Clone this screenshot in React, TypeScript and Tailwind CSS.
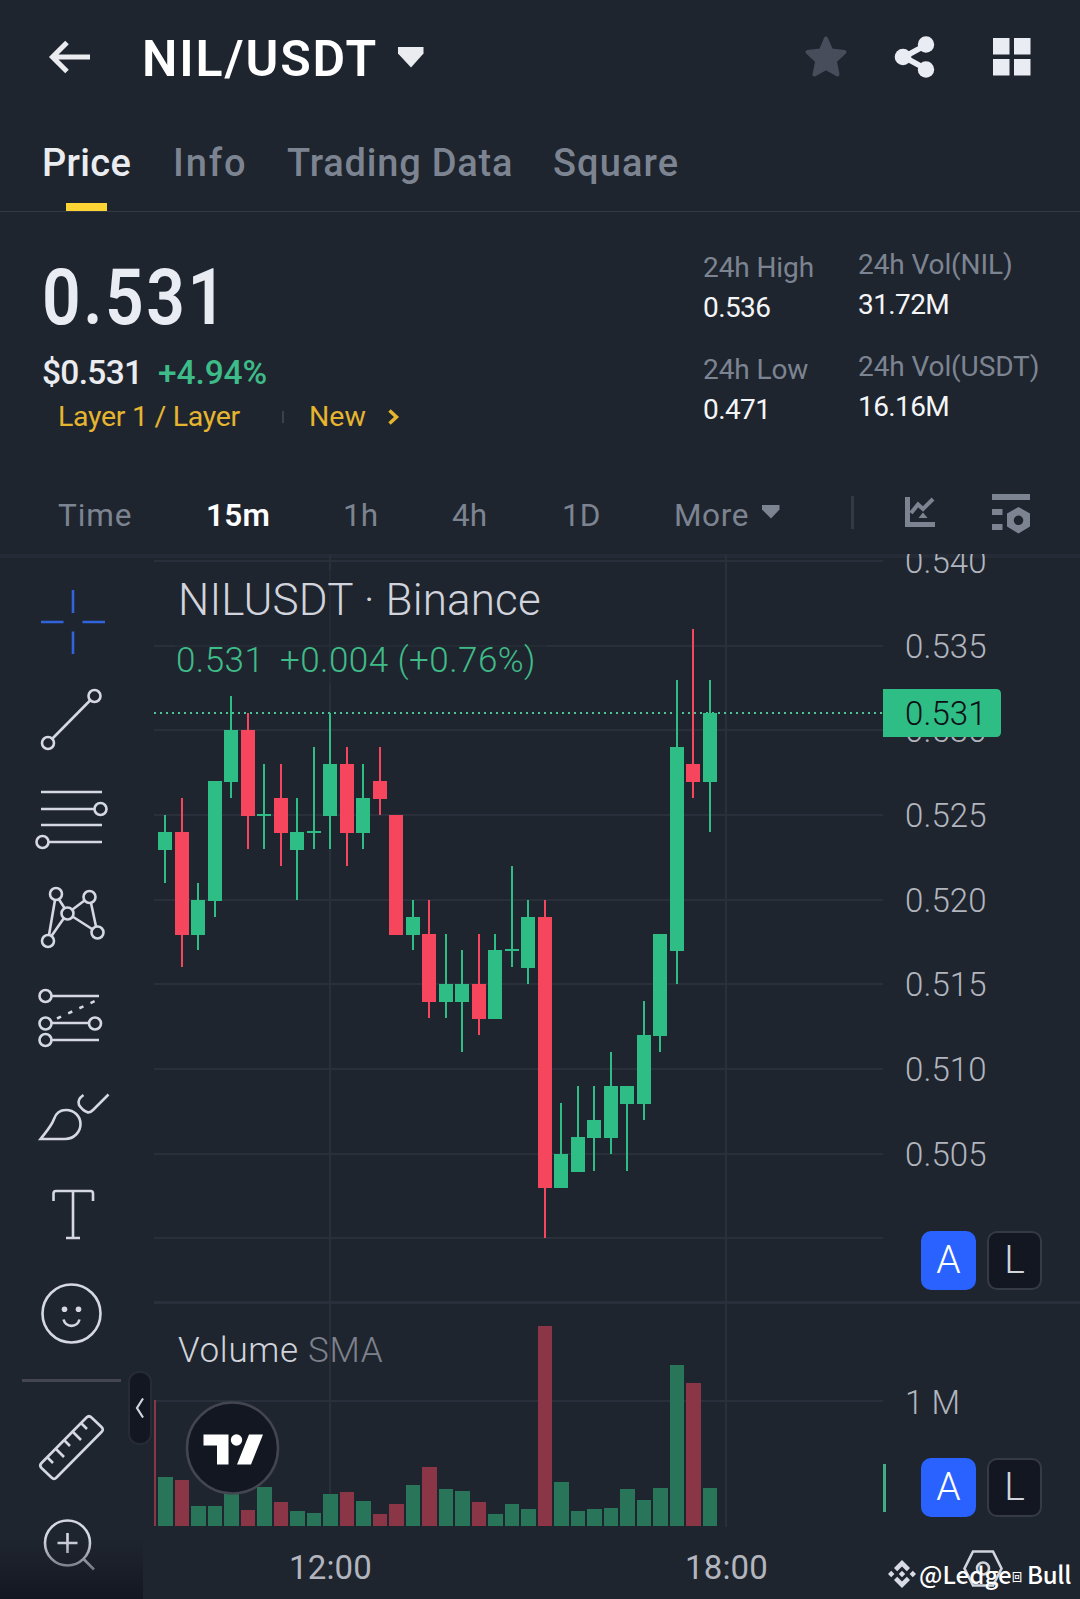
import type { ReactNode } from "react";

type Candle = {
  up: boolean;
  high: number;
  top: number;
  bottom: number;
  low: number;
  vol: number;
};

const UP = "#2ebd85";
const DOWN = "#f6465d";
const GRID = "#2a303b";

const c = (
  side: "u" | "d",
  high: number,
  top: number,
  bottom: number,
  low: number,
  vol: number
): Candle => ({ up: side === "u", high, top, bottom, low, vol });

// prices are in thousandths, volume in px
const candles: Candle[] = [
  c("u", 525, 524, 523, 521, 49),
  c("d", 526, 524, 518, 516, 46),
  c("u", 521, 520, 518, 517, 20),
  c("u", 527, 527, 520, 519, 20),
  c("u", 532, 530, 527, 526, 32),
  c("d", 531, 530, 525, 523, 16),
  c("u", 528, 525, 525, 523, 39),
  c("d", 528, 526, 524, 522, 24),
  c("u", 526, 524, 523, 520, 15),
  c("u", 529, 524, 524, 523, 13),
  c("u", 531, 528, 525, 523, 32),
  c("d", 529, 528, 524, 522, 34),
  c("u", 528, 526, 524, 523, 25),
  c("d", 529, 527, 526, 525, 12),
  c("d", 525, 525, 518, 518, 22),
  c("u", 520, 519, 518, 517, 41),
  c("d", 520, 518, 514, 513, 59),
  c("u", 518, 515, 514, 513, 37),
  c("u", 517, 515, 514, 511, 35),
  c("d", 518, 515, 513, 512, 24),
  c("u", 518, 517, 513, 513, 12),
  c("u", 522, 517, 517, 516, 22),
  c("u", 520, 519, 516, 515, 17),
  c("d", 520, 519, 503, 500, 200),
  c("u", 508, 505, 503, 503, 44),
  c("u", 509, 506, 504, 504, 15),
  c("u", 509, 507, 506, 504, 17),
  c("u", 511, 509, 506, 505, 18),
  c("u", 509, 509, 508, 504, 37),
  c("u", 514, 512, 508, 507, 26),
  c("u", 518, 518, 512, 511, 38),
  c("u", 533, 529, 517, 515, 161),
  c("d", 536, 528, 527, 526, 143),
  c("u", 533, 531, 527, 524, 38),
];

const yOf = (p: number) => Math.round(815 - (p - 525) * 16.93);
const xOf = (i: number) => Math.round(158 + 16.5 * i);

const priceLabels = [540, 535, 530, 525, 520, 515, 510, 505];
const gridPrices = [540, 535, 530, 525, 520, 515, 510, 505, 500];

const tabs = [
  { label: "Price", width: "w-[131px]", track: "tracking-[0.3px]", active: true },
  { label: "Info", width: "w-[114px]", track: "tracking-[1.9px]" },
  { label: "Trading Data", width: "w-[266px]", track: "tracking-[0.8px]" },
  { label: "Square", width: "w-[160px]", track: "tracking-[1.1px]" },
];

const intervals = [
  { label: "Time", width: "w-[148px]", track: "tracking-[0.9px]" },
  { label: "15m", width: "w-[137px]", track: "tracking-[0.2px]", active: true },
  { label: "1h", width: "w-[109px]", track: "tracking-normal" },
  { label: "4h", width: "w-[110px]", track: "tracking-normal" },
  { label: "1D", width: "w-[112px]", track: "tracking-normal" },
  { label: "More", width: "w-[88px]", track: "tracking-[0.6px]" },
];

const Header = () => (
  <header className="flex h-[114px] items-center pl-12">
    <svg className="h-[34px] w-[44px]" viewBox="0 0 44 34" fill="none" stroke="#eaecef" strokeWidth="5">
      <path d="M19 2.5 4.5 17 19 31.5M5 17H42" />
    </svg>
    <h1 className="ml-[50px] w-[256px] pt-1 text-[50px] leading-[60px] font-semibold tracking-[1.9px] text-white">
      NIL/USDT
    </h1>
    <svg className="h-[21px] w-[26px]" viewBox="0 0 26 21" fill="#eaecef">
      <path d="M0 0H25.500V6.500L13 20.500 0 6.500Z" />
    </svg>
    <svg
      className="ml-[380px] h-[44px] w-[44px]"
      viewBox="0 0 44 44"
      fill="#474d5b"
      stroke="#474d5b"
      strokeWidth="4"
      strokeLinejoin="round"
    >
      <path d="M22 3.500 27.200 15.500 40.500 17 30.800 26 33.500 39.500 22 33 10.500 39.500 13.200 26 3.500 17 16.800 15.500Z" />
    </svg>
    <svg className="ml-[46px] h-[42px] w-[42px]" viewBox="0 0 42 42" fill="#eaecf3">
      <path d="M10 21 33 8.500M10 21 33 33.500" stroke="#eaecf3" strokeWidth="5.500" />
      <circle cx="9" cy="21" r="8.300" />
      <circle cx="32" cy="8.500" r="8.200" />
      <circle cx="32" cy="33.500" r="8.200" />
    </svg>
    <svg className="ml-[57px] h-[38px] w-[38px]" viewBox="0 0 38 38" fill="#eaecf3">
      <path d="M0 0H16.500V16.500H0ZM21 0H37.500V16.500H21ZM0 21H16.500V37.500H0ZM21 21H37.500V37.500H21Z" />
    </svg>
  </header>
);

const Tabs = () => (
  <nav className="flex h-[98px] border-b border-[#333a45] pt-6 pl-[42px]">
    {tabs.map((t) => (
      <div key={t.label} className={`${t.width} flex flex-col justify-between whitespace-nowrap`}>
        <span
          className={`text-[38px] leading-[50px] font-medium ${t.track} ${
            t.active ? "text-[#eaecef]" : "text-[#848b98]/95"
          }`}
        >
          {t.label}
        </span>
        {t.active && <span className="ml-6 h-2 w-[41px] bg-[#fcd535]" />}
      </div>
    ))}
  </nav>
);

const Stat = ({ label, value }: { label: string; value: string }) => (
  <div className="text-[28px] leading-10 whitespace-nowrap">
    <div className="tracking-[-0.1px] text-[#7d8491]">{label}</div>
    <div className="tracking-[-0.6px] text-[#f4f5f7]">{value}</div>
  </div>
);

const Summary = () => (
  <section className="flex h-[262px] pl-[42px]">
    <div className="w-[661px] pt-[46px]">
      <div className="origin-left scale-x-[0.88] text-[77px] leading-[80px] font-semibold tracking-[2.9px] text-[#eaecf3]">
        0.531
      </div>
      <div className="mt-[15px] flex text-[33.5px] leading-10 font-medium">
        <span className="w-[116px] tracking-[-0.7px] text-[#eaecef]">$0.531</span>
        <span className="tracking-[-0.1px] text-[#3dbb88]">+4.94%</span>
      </div>
      <div className="mt-1.5 flex items-center text-[28.5px] leading-9 text-[#e6b52f]">
        <span className="ml-4 w-[224px] tracking-[-0.3px]">Layer 1 / Layer</span>
        <span className="h-3 w-0.5 bg-[#3a414d]" />
        <span className="ml-[25px] w-[79px]">New</span>
        <svg className="h-4 w-3" viewBox="0 0 12 16" fill="none" stroke="#e6b52f" strokeWidth="3.500">
          <path d="M1.500 1.500 8.500 8 1.500 14.500" />
        </svg>
      </div>
    </div>
    <div className="flex w-[155px] flex-col gap-[22px] pt-9">
      <Stat label="24h High" value="0.536" />
      <Stat label="24h Low" value="0.471" />
    </div>
    <div className="flex flex-col gap-[22px] pt-[33px]">
      <Stat label="24h Vol(NIL)" value="31.72M" />
      <Stat label="24h Vol(USDT)" value="16.16M" />
    </div>
  </section>
);

const Intervals = () => (
  <div className="flex h-[80px] items-center pt-0.5 pl-[58px] text-[31.5px] leading-10">
    {intervals.map((t) => (
      <span
        key={t.label}
        className={`${t.width} ${t.track} pt-0.5 ${
          t.active ? "font-semibold text-white" : "text-[#7d8491]"
        }`}
      >
        {t.label}
      </span>
    ))}
    <svg className="-mt-1.5 h-[14px] w-[18px]" viewBox="0 0 18 14" fill="#7d8491">
      <path d="M0 0H17.500V4.500L9 13.500 0 4.500Z" />
    </svg>
    <span className="-mt-1.5 ml-[71px] h-[33px] w-[3px] bg-[#333945]" />
    <svg className="-mt-1.5 ml-[51px] h-[30px] w-[30px]" viewBox="0 0 30 30" fill="none" stroke="#7d8491">
      <path d="M2.500 0V27.500H30" strokeWidth="5" />
      <path d="M6 16 13 7.500 18 12 28 2" strokeWidth="4" />
      <path d="M13.500 21H22.500L18 15.500Z" fill="#7d8491" stroke="none" />
    </svg>
    <svg className="-mt-0.5 ml-[57px] h-[40px] w-[38px]" viewBox="0 0 38 40" fill="#7d8491">
      <path d="M0 0H38V6H0ZM0 15H10.500V21H0ZM0 30H10.500V36H0Z" />
      <path
        fillRule="evenodd"
        d="M26.500 13 38 19.500V32.500L26.500 39.500 15 32.500V19.500ZM26.500 21.500A4.800 4.800 0 1 0 26.500 31.100 4.800 4.800 0 1 0 26.500 21.500Z"
      />
    </svg>
  </div>
);

const Tool = ({ children, color = "#d5d8e3" }: { children: ReactNode; color?: string }) => (
  <svg
    className="h-[99px] w-[143px] shrink-0"
    viewBox="0 0 143 99"
    fill="none"
    stroke={color}
    strokeWidth="2.6"
  >
    {children}
  </svg>
);

const Toolbar = () => (
  <aside className="relative flex w-[143px] flex-col overflow-hidden pt-[18px]">
    <Tool color="#3163dd">
      <path d="M41 50H63.500M82.500 50H105M73 18V41M73 59.500V82" />
    </Tool>
    <Tool>
      <circle cx="94.500" cy="25" r="6" />
      <circle cx="48" cy="72" r="6" />
      <path d="M52.500 67.500 90 29.500" />
    </Tool>
    <Tool>
      <path d="M41 22H102M41 39H94M41 55H102M49 72H102" />
      <circle cx="100.500" cy="39" r="6" />
      <circle cx="42.500" cy="72" r="6" />
    </Tool>
    <Tool>
      <path d="M49 66 55 31M59 30.500 64.500 39M51.500 67 64 49M72.500 40.500 84.500 31.500M72.500 47.500 92 60M91 34 96 57.500" />
      <circle cx="56" cy="25" r="6" />
      <circle cx="89.500" cy="28" r="6" />
      <circle cx="67.500" cy="44.500" r="6" />
      <circle cx="97.500" cy="63.500" r="6" />
      <circle cx="48" cy="72" r="6" />
    </Tool>
    <Tool>
      <path d="M52 28H99M52 55H89M52 72H99" />
      <path d="M57 50.500 95 33" strokeDasharray="4.500 7.800" />
      <circle cx="45.500" cy="28" r="6" />
      <circle cx="45.500" cy="55.500" r="6" />
      <circle cx="95" cy="55.500" r="6" />
      <circle cx="45.500" cy="72" r="6" />
    </Tool>
    <Tool>
      <path d="M40.500 72H65C74 72 80.500 65 80.500 57S74 43 66 43C60 43 56 46 54 52 51 60 45 66 40.500 72Z" />
      <path d="M83.500 28C79 31 77.500 34 79 38 81 41 84 44 87 45 89 46 91 45 93 43L108.500 27.500" />
    </Tool>
    <Tool>
      <path d="M53.500 35V27.500Q53.500 25 56 25H90.500Q93 25 93 27.500V35M73 25V72M66 72H80" />
    </Tool>
    <Tool>
      <circle cx="71.500" cy="48.500" r="29" />
      <circle cx="64.500" cy="44.300" r="2.800" fill="#d5d8e3" stroke="none" />
      <circle cx="78.500" cy="44.300" r="2.800" fill="#d5d8e3" stroke="none" />
      <path d="M63.500 54.500C66 63 77 63 79.500 54.500" />
    </Tool>
    <div className="mt-[15px] ml-[22px] h-[3px] w-[99px] shrink-0 bg-[#434651]" />
    <div className="mt-[16px] shrink-0">
      <Tool>
        <path d="M86.500 19.500Q89 17 91.500 19.500L101.500 29Q104 31.500 101.500 34L56.500 79.500Q54 82 51.500 79.500L41.500 70Q39 67.500 41.500 65Z" />
        <path d="M81.500 25.500 87 31M73 34 81 42M64.500 42.500 70 48M56 51 64 59M47.500 59.500 53 65" />
      </Tool>
    </div>
    <Tool>
      <circle cx="67.500" cy="46" r="22.500" />
      <path d="M83.500 62 94 72.500M57.500 46H77.500M67.500 36V56" />
    </Tool>
    <div className="absolute bottom-0 left-0 h-[60px] w-full bg-linear-to-b from-[#131722]/0 to-[#131722]" />
  </aside>
);

const ScaleButtons = ({ className }: { className: string }) => (
  <div
    className={`absolute left-[778px] flex gap-[11px] text-center text-[39px] leading-[57px] font-light ${className}`}
  >
    <button className="h-[59px] w-[55px] rounded-[10px] bg-[#2962ff] text-white">A</button>
    <button className="h-[59px] w-[55px] rounded-[10px] border-2 border-[#363a45] bg-[#131722] leading-[53px] text-[#d1d4dc]">
      L
    </button>
  </div>
);

const Chart = () => (
  <div className="relative w-[937px]">
    <svg className="h-[1045px] w-[937px]" viewBox="143 554 937 1045" fontFamily="Roboto, sans-serif">
      <g fill={GRID}>
        {gridPrices.map((p) => (
          <rect key={p} x="154" y={yOf(p) - 1} width="729" height="2" />
        ))}
        <rect x="154" y="1400" width="729" height="2" />
        <rect x="329" y="554" width="2" height="972" />
        <rect x="725" y="554" width="2" height="973" />
        <rect x="154" y="1301" width="926" height="3" />
      </g>

      <rect x="154" y="1400" width="2" height="126" fill="#8a3646" />
      {candles.map((k, i) => (
        <rect
          key={i}
          x={xOf(i)}
          y={1526 - k.vol}
          width={xOf(i + 1) - 2 - xOf(i)}
          height={k.vol}
          fill={k.up ? "#29755a" : "#8a3646"}
        />
      ))}

      <path d="M154 713H883" stroke="#4cc496" strokeWidth="2" strokeDasharray="2 4" />
      {candles.map((k, i) => (
        <g key={i} fill={k.up ? UP : DOWN}>
          <rect x={xOf(i) + 6} y={yOf(k.high)} width="2" height={yOf(k.low) - yOf(k.high)} />
          <rect
            x={xOf(i)}
            y={k.top === k.bottom ? yOf(k.top) - 1 : yOf(k.top)}
            width="14"
            height={k.top === k.bottom ? 2 : yOf(k.bottom) - yOf(k.top) + 1}
          />
        </g>
      ))}

      <g fontSize="33" fontWeight="300" fill="#b2b5be" letterSpacing="0.1">
        {priceLabels.map((p) => (
          <text key={p} x="905" y={yOf(p) + 12}>
            {(p / 1000).toFixed(3)}
          </text>
        ))}
        <text x="905" y="1414">1 M</text>
      </g>
      <path d="M883 689H996Q1001 689 1001 694V732Q1001 737 996 737H883Z" fill={UP} />
      <text x="905" y="725" fontSize="33" fontWeight="300" letterSpacing="0.1" fill="#0c0e15">
        0.531
      </text>

      <rect x="175" y="570" width="372" height="115" fill="#1f252f" fillOpacity="0.5" />
      <text x="178" y="615" fontSize="44" fontWeight="300" letterSpacing="0.15" fill="#d1d4dc">
        NILUSDT · Binance
      </text>
      <g fontSize="35" fontWeight="300" letterSpacing="0.45" fill="#3fbb88">
        <text x="176" y="672">0.531</text>
        <text x="280" y="672">+0.004 (+0.76%)</text>
      </g>
      <g fontSize="35" fontWeight="300" letterSpacing="0.7">
        <text x="178" y="1362" fill="#d1d4dc">Volume</text>
        <text x="308" y="1362" fill="#7d818c">SMA</text>
      </g>
      <g fontSize="33" fill="#b2b5be" textAnchor="middle">
        <text x="330.500" y="1579" letterSpacing="0.2">12:00</text>
        <text x="726.500" y="1579" letterSpacing="0.2">18:00</text>
      </g>

      <circle cx="232.500" cy="1448" r="45.500" fill="#131722" stroke="#434651" strokeWidth="2.500" />
      <g fill="#fff">
        <path d="M203.500 1434.500H228.500V1464.500H217V1445.500H203.500Z" />
        <circle cx="236.500" cy="1440" r="5.700" />
        <path d="M249 1434.500H263L251 1464.500H237Z" />
      </g>

      <rect x="883" y="1464" width="3" height="48" fill="#3fae82" />

      <g fill="none" stroke="#d1d4dc" strokeWidth="2.600">
        <path d="M973 1551.500H993L1001.500 1568.500 993 1585.500H973L964.500 1568.500Z" />
        <circle cx="983" cy="1568.500" r="6" />
      </g>
    </svg>

    <ScaleButtons className="top-[677px]" />
    <ScaleButtons className="top-[904px]" />

    <div className="absolute bottom-0 left-[745px] flex h-[50px] items-center font-['Noto_Sans_CJK_SC',sans-serif] text-[24px] leading-8 font-medium text-white">
      <svg className="h-7 w-7" viewBox="0 0 28 28" fill="#d8dbe3">
        <path d="M14 0 22 8 18.800 11.200 14 6.400 9.200 11.200 6 8ZM14 28 22 20 18.800 16.800 14 21.600 9.200 16.800 6 20ZM14 10.800 17.200 14 14 17.200 10.800 14ZM3.200 10.800 6.400 14 3.200 17.200 0 14ZM24.800 10.800 28 14 24.800 17.200 21.600 14Z" />
      </svg>
      <span className="ml-[3px] w-[93px] tracking-[0.1px]">@Ledge</span>
      <span className="mt-1.5 w-[15px] text-[10px] leading-3">回</span>
      <span className="tracking-[-0.3px]">Bull</span>
    </div>
  </div>
);

export default function App() {
  return (
    <div className="h-[1599px] w-[1080px] overflow-hidden bg-[#1f252f] font-['Roboto',sans-serif]">
      <Header />
      <Tabs />
      <Summary />
      <Intervals />
      <main className="relative flex h-[1045px]">
        <div className="absolute top-0 left-0 h-1 w-full bg-[#262c37]" />
        <Toolbar />
        <Chart />
        <div className="absolute top-[817px] left-[128px] flex h-[74px] w-[24px] items-center justify-center rounded-[11px] border-2 border-[#262b36] bg-[#131722]">
          <svg className="h-5 w-2.5" viewBox="0 0 10 20" fill="none" stroke="#d1d4dc" strokeWidth="2.200">
            <path d="M8 0.500 2 10 8 19.500" />
          </svg>
        </div>
      </main>
    </div>
  );
}
